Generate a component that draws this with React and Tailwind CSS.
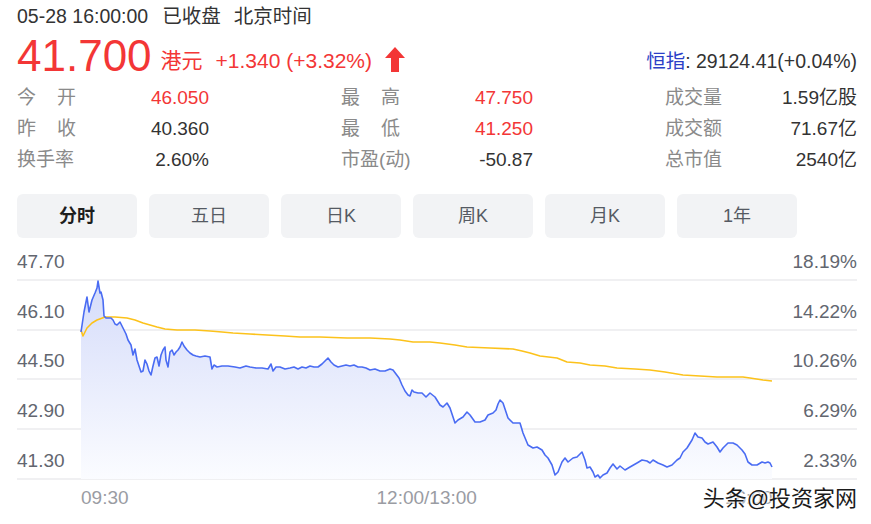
import React from "react";

const blue = [
  [81,332],[84,312],[87,297],[89,312],[92,300],[95,293],[97,288],[98,281],[100,293],[101,292],[103,300],[104,316],[106,318],[109,318],[111,318],[113,320],[115,324],[117,325],[120,322],[123,328],[126,334],[128,340],[131,345],[133,355],[135,349],[137,360],[139,366],[141,372],[143,371],[145,360],[147,364],[149,371],[151,375],[153,366],[155,358],[157,357],[159,366],[161,355],[163,350],[165,347],[166,360],[168,367],[170,352],[172,350],[174,355],[176,352],[178,350],[180,347],[182,342],[184,346],[187,350],[190,353],[193,355],[196,356],[200,357],[205,356],[210,357],[212,369],[214,365],[217,367],[222,366],[228,366],[235,367],[240,368],[246,366],[250,367],[256,368],[262,368],[268,369],[271,364],[273,371],[276,367],[280,367],[285,369],[290,368],[294,367],[298,369],[302,367],[306,368],[310,366],[314,367],[318,367],[322,364],[325,361],[328,358],[331,362],[334,365],[338,367],[342,366],[346,365],[350,366],[354,365],[358,367],[362,367],[366,368],[370,370],[375,369],[380,371],[385,371],[390,369],[393,370],[396,374],[399,378],[402,385],[405,391],[408,395],[410,396],[412,390],[414,392],[418,393],[422,393],[426,397],[430,393],[435,397],[440,405],[443,407],[447,403],[450,408],[455,423],[458,420],[463,417],[467,412],[470,415],[475,422],[480,422],[485,420],[488,415],[493,413],[496,410],[498,404],[500,400],[503,403],[508,418],[513,423],[520,423],[523,433],[528,445],[533,448],[537,447],[542,450],[545,455],[548,458],[552,465],[555,475],[558,472],[562,462],[565,458],[568,462],[573,458],[577,457],[582,452],[585,460],[587,468],[590,467],[593,472],[595,477],[598,475],[600,478],[603,475],[607,473],[610,468],[613,464],[617,469],[620,466],[625,470],[630,467],[637,463],[642,460],[647,461],[650,463],[653,460],[658,463],[663,465],[667,467],[672,465],[677,460],[680,458],[683,452],[687,448],[692,440],[695,433],[698,437],[702,438],[705,442],[708,444],[713,442],[717,447],[720,452],[723,448],[728,443],[733,443],[737,445],[742,450],[745,454],[748,462],[752,465],[757,465],[762,462],[765,463],[768,462],[770,463],[772,467]
];

const yellow = [
  [81,330],[83,336],[87,328],[92,323],[97,320],[105,317],[115,317],[127,318],[135,320],[143,323],[150,325],[157,327],[165,329],[177,330],[195,330],[210,331],[222,332],[233,333],[250,334],[267,335],[285,336],[300,337],[320,337],[347,338],[370,338],[390,339],[400,340],[413,342],[430,342],[440,343],[455,345],[467,347],[490,348],[513,349],[522,351],[530,353],[540,356],[557,358],[567,362],[580,363],[590,365],[605,366],[617,368],[635,369],[650,370],[665,372],[683,375],[700,376],[717,377],[743,377],[750,378],[763,380],[772,381]
];

const pts = (a) => a.map((p) => p.join(",")).join(" ");

function Label({ chars }) {
  if (chars.length === 2) {
    return (
      <span className="w-[59px] flex justify-between text-[#8a8a8a]">
        <span>{chars[0]}</span>
        <span>{chars[1]}</span>
      </span>
    );
  }
  return <span className="text-[#8a8a8a]">{chars}</span>;
}

function Stat({ label, value, red }) {
  return (
    <div className="h-[31px] flex items-center justify-between">
      <Label chars={label} />
      <span className={red ? "text-[#f33636]" : "text-[#333]"}>{value}</span>
    </div>
  );
}

export default function App() {
  const col1 = [
    ["今开", "46.050", true],
    ["昨收", "40.360", false],
    ["换手率", "2.60%", false],
  ];
  const col2 = [
    ["最高", "47.750", true],
    ["最低", "41.250", true],
    ["市盈(动)", "-50.87", false],
  ];
  const col3 = [
    ["成交量", "1.59亿股", false],
    ["成交额", "71.67亿", false],
    ["总市值", "2540亿", false],
  ];
  const tabs = ["分时", "五日", "日K", "周K", "月K", "1年"];
  const rows = [
    ["47.70", "18.19%", "h-[31px]"],
    ["46.10", "14.22%", "h-[50px]"],
    ["44.50", "10.26%", "h-[49px]"],
    ["42.90", "6.29%", "h-[50px]"],
    ["41.30", "2.33%", "h-[50px]"],
  ];
  const fillPts = pts(blue) + " 772,479 81,479";

  return (
    <div className="w-[871px] h-[524px] bg-white overflow-hidden font-['Liberation_Sans','Noto_Sans_CJK_SC',sans-serif] text-[#333]">
      {/* top line */}
      <div className="h-[34px] pl-[17px] flex items-center text-[19.5px] text-[#333]">
        <span>05-28 16:00:00</span>
        <span className="ml-[14px]">已收盘</span>
        <span className="ml-[13px]">北京时间</span>
      </div>

      {/* price line */}
      <div className="h-[48px] pl-[17px] pr-[14px] flex items-center justify-between">
        <div className="flex items-center">
          <span className="mb-[4px] text-[44px] leading-[44px] text-[#f33636]">41.700</span>
          <span className="ml-[9px] mt-[6px] text-[21px] leading-[24px] text-[#f33636]">港元</span>
          <span className="ml-[13px] mt-[6px] text-[21px] leading-[24px] text-[#f33636]">+1.340 (+3.32%)</span>
          <svg className="ml-[13px] mt-[2px]" width="20" height="25" viewBox="0 0 20 25">
            <polygon points="10,0 20,11 14,11 14,25 6,25 6,11 0,11" fill="#f33636" />
          </svg>
        </div>
        <div className="mt-[6px] text-[19.5px] leading-[24px]">
          <span className="text-[#2c3fc7]">恒指</span>
          <span className="text-[#333]">: 29124.41(+0.04%)</span>
        </div>
      </div>

      {/* stats */}
      <div className="mt-[1px] pl-[17px] grid grid-cols-[192px_192px_192px] gap-x-[132px] text-[19px]">
        {[col1, col2, col3].map((col, i) => (
          <div key={i} className="flex flex-col">
            {col.map(([l, v, r]) => (
              <Stat key={l} label={l} value={v} red={r} />
            ))}
          </div>
        ))}
      </div>

      {/* tabs */}
      <div className="mt-[18px] pl-[17px] flex gap-[12px]">
        {tabs.map((t, i) => (
          <div
            key={t}
            className={
              "w-[120px] h-[44px] rounded-[6px] bg-[#f2f3f5] flex items-center justify-center text-[18px] " +
              (i === 0 ? "font-bold text-[#1e1e1e]" : "text-[#555a63]")
            }
          >
            {t}
          </div>
        ))}
      </div>

      {/* chart */}
      <div className="relative mt-[12px] pl-[17px] pr-[14px]">
        {rows.map(([l, r, h]) => (
          <div
            key={l}
            className={h + " border-b-2 border-[#f0f0f2] flex items-end justify-between pb-[7px] text-[19px] leading-[20px] text-[#62666f]"}
          >
            <span>{l}</span>
            <span>{r}</span>
          </div>
        ))}
        <svg
          className="absolute left-0 top-0"
          width="871"
          height="230"
          viewBox="0 250 871 230"
        >
          <defs>
            <linearGradient id="fillg" gradientUnits="userSpaceOnUse" x1="0" y1="280" x2="0" y2="480">
              <stop offset="0" stopColor="#d5dcfa" />
              <stop offset="1" stopColor="#fbfcff" />
            </linearGradient>
          </defs>
          <polygon points={fillPts} fill="url(#fillg)" />
          <polyline points={pts(yellow)} fill="none" stroke="#fcc21b" strokeWidth="1.6" strokeLinejoin="round" />
          <polyline points={pts(blue)} fill="none" stroke="#4a6cf3" strokeWidth="1.6" strokeLinejoin="round" />
        </svg>
      </div>

      {/* time axis */}
      <div className="relative h-[36px] pl-[81px] pr-[14px] flex items-center text-[19px] text-[#9a9ca3]">
        <span>09:30</span>
        <span className="ml-[248px]">12:00/13:00</span>
        <span className="ml-[248px]">16:00</span>
        <span className="absolute right-[14px] top-1/2 -translate-y-1/2 text-[22px] text-[#1b1b1b] [text-shadow:0_0_2px_#fff,0_0_2px_#fff,0_0_3px_#fff]">
          头条@投资家网
        </span>
      </div>
    </div>
  );
}
